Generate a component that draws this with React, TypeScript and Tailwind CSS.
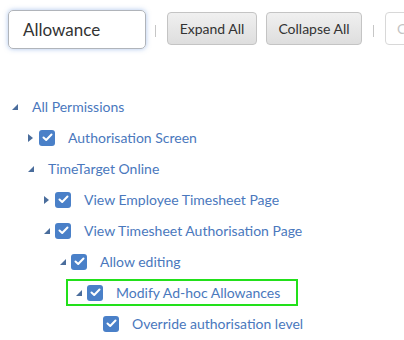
import React from "react";

type Node = {
  label: string;
  depth: number;
  toggle?: "open" | "closed";
  checked?: boolean;
  highlight?: boolean;
};

const rows: Node[] = [
  { label: "All Permissions", depth: 0, toggle: "open" },
  { label: "Authorisation Screen", depth: 1, toggle: "closed", checked: true },
  { label: "TimeTarget Online", depth: 1, toggle: "open" },
  { label: "View Employee Timesheet Page", depth: 2, toggle: "closed", checked: true },
  { label: "View Timesheet Authorisation Page", depth: 2, toggle: "open", checked: true },
  { label: "Allow editing", depth: 3, toggle: "open", checked: true },
  { label: "Modify Ad-hoc Allowances", depth: 4, toggle: "open", checked: true, highlight: true },
  { label: "Override authorisation level", depth: 5, checked: true },
];

const indents = ["pl-[12px]", "pl-[28px]", "pl-[44px]", "pl-[60px]", "pl-[76px]", "pl-[92px]"];

const Toggle = ({ kind }: { kind?: "open" | "closed" }) => {
  if (!kind) return <span className="w-[11px] shrink-0" />;
  return (
    <span className="w-[11px] shrink-0 flex items-center">
      {kind === "open" ? (
        <svg width="6" height="6" viewBox="0 0 6 6">
          <path d="M6 0 L6 6 L0 6 Z" fill="#4a6d9c" />
        </svg>
      ) : (
        <svg width="5" height="8" viewBox="0 0 5 8">
          <path d="M0 0 L5 4 L0 8 Z" fill="#4a6d9c" />
        </svg>
      )}
    </span>
  );
};

const Check = () => (
  <span className="w-[16px] h-[16px] shrink-0 rounded-[3px] bg-[#4a80c8] flex items-center justify-center">
    <svg width="11" height="9" viewBox="0 0 11 9">
      <path d="M1.5 4.5 L4.2 7 L9.5 1.5" stroke="white" strokeWidth="2" fill="none" strokeLinecap="round" strokeLinejoin="round" />
    </svg>
  </span>
);

const Btn = ({ children, w }: { children: React.ReactNode; w: string }) => (
  <button className={`${w} shrink-0 mt-[2px] h-[33px] rounded-[4px] border border-[#c4c4c4] bg-gradient-to-b from-[#f0f0f0] to-[#dedede] text-[14px] text-[#333]`}>
    {children}
  </button>
);

const Sep = () => <span className="shrink-0 w-px h-[12px] bg-[#c6c6c6] mt-[15px]" />;

export default function App() {
  return (
    <div className="w-[404px] h-[340px] bg-white overflow-hidden font-['Lato','Open_Sans',sans-serif]">
      <div className="flex items-start pt-[10px] pl-[8px] whitespace-nowrap">
        <div className="w-[138px] h-[39px] shrink-0 rounded-[5px] border border-[#b0b4ba] shadow-[0_0_5px_rgba(90,140,220,0.5)] flex items-center pl-[14px] text-[17px] text-[#333]">
          Allowance
        </div>
        <span className="ml-[9px]" />
        <Sep />
        <span className="ml-[11px]" />
        <Btn w="w-[90px]">Expand All</Btn>
        <span className="ml-[9px]" />
        <Btn w="w-[96px]">Collapse All</Btn>
        <span className="ml-[11px]" />
        <Sep />
        <span className="ml-[11px]" />
        <button className="shrink-0 mt-[2px] h-[33px] px-[11px] rounded-[4px] border border-[#d8d8d8] bg-white text-[14px] text-[#c4c4c4]">
          Clear
        </button>
      </div>

      <div className="mt-[42px] flex flex-col">
        {rows.map((r) => (
          <div key={r.label} className={`h-[31px] flex items-center ${indents[r.depth]}`}>
            <div
              className={`flex items-center h-[23px] ${
                r.highlight ? "outline outline-2 outline-[#22e01a] -ml-[8px] pl-[8px] pr-[16px]" : ""
              }`}
            >
              <Toggle kind={r.toggle} />
              {r.checked && <Check />}
              <span className={`text-[14px] text-[#4a78bd] ${r.checked ? "ml-[13px]" : "ml-[9px]"}`}>{r.label}</span>
            </div>
          </div>
        ))}
      </div>
    </div>
  );
}
